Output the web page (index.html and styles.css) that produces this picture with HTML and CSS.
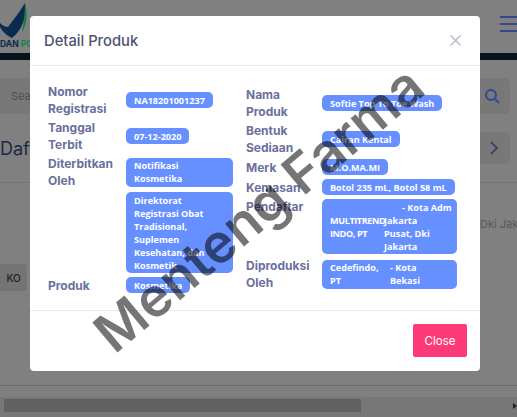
FILE: index.html
```html
<!DOCTYPE html>
<html lang="en">
<head>
  <meta charset="UTF-8" />
  <meta name="viewport" content="width=device-width, initial-scale=1.0" />
  <title>Detail Produk</title>
  <link rel="stylesheet" href="styles.css">
</head>
<body>

<div class="page">
  <div class="top-bar">
    <div class="logo">
      <svg class="logo-mark" width="30" height="40" viewBox="0 0 30 40">
        <path d="M0 23 C3 26 6 27 8 27 C13 20 20 12 25 3 C26 16 24 28 12 38 C7 36 2 31 0 27 Z" fill="#0a2a4f" />
        <path d="M25 3 C28 14 27 24 22 32 C24 22 25 12 25 3 Z" fill="#14813f" />
      </svg>
      <span class="logo-text">DAN <span class="logo-green">PO</span></span>
    </div>
    <div class="burger"><span></span><span></span><span></span></div>
  </div>
  <div class="strip"></div>

  <div class="search">
    <span class="search-text">Search</span>
    <svg width="16" height="16" viewBox="0 0 16 16" fill="none" stroke="#2c4a9a" stroke-width="2">
      <circle cx="7" cy="7" r="5" />
      <path d="M11 11 L15 15" />
    </svg>
  </div>

  <div class="list-head">
    <h2>Daftar Produk</h2>
    <div class="next-box">
      <svg width="10" height="14" viewBox="0 0 10 14" fill="none" stroke="#3b4468" stroke-width="2"><path d="M2 1 L8 7 L2 13" /></svg>
    </div>
  </div>

  <div class="list-row">
    <span class="row-city">Dki Jakarta</span>
  </div>
  <div class="ko-box">KO</div>

  <div class="bottom">
    <div class="scroll-track">
      <div class="scroll-thumb"></div>
      <div class="scroll-arrow"></div>
    </div>
  </div>
</div>

<div class="modal">
  <div class="modal-header">
    <h5>Detail Produk</h5>
    <svg class="close-x" width="11" height="11" viewBox="0 0 11 11" stroke="#b9bccb" stroke-width="1.5"><path d="M0.5 0.5 L10.5 10.5 M10.5 0.5 L0.5 10.5" /></svg>
  </div>

  <div class="modal-body">
    <div class="info-col left">
      <div class="info-row">
        <div class="label">Nomor Registrasi</div>
        <div class="badge">NA18201001237</div>
      </div>
      <div class="info-row">
        <div class="label">Tanggal Terbit</div>
        <div class="badge">07-12-2020</div>
      </div>
      <div class="info-row">
        <div class="label">Diterbitkan Oleh</div>
        <div class="badge wrap">Notifikasi Kosmetika</div>
      </div>
      <div class="info-row">
        <div class="label"></div>
        <div class="badge wrap">Direktorat Registrasi Obat Tradisional, Suplemen Kesehatan, dan Kosmetik</div>
      </div>
      <div class="info-row">
        <div class="label">Produk</div>
        <div class="badge">Kosmetika</div>
      </div>
    </div>

    <div class="info-col right">
      <div class="info-row">
        <div class="label">Nama Produk</div>
        <div class="badge">Softie Top To Toe Wash</div>
      </div>
      <div class="info-row">
        <div class="label">Bentuk Sediaan</div>
        <div class="badge">Cairan Kental</div>
      </div>
      <div class="info-row">
        <div class="label">Merk</div>
        <div class="badge">M.O.MA.MI</div>
      </div>
      <div class="info-row">
        <div class="label">Kemasan</div>
        <div class="badge">Botol 235 mL, Botol 58 mL</div>
      </div>
      <div class="info-row top">
        <div class="label">Pendaftar</div>
        <div class="badge split">
          <span class="split-name">MULTITREND INDO, PT</span>
          <span class="split-place indent">- Kota Adm<br>Jakarta<br>Pusat, Dki<br>Jakarta</span>
        </div>
      </div>
      <div class="info-row">
        <div class="label">Diproduksi Oleh</div>
        <div class="badge split">
          <span class="split-name wide">Cedefindo,<br>PT</span>
          <span class="split-place">- Kota<br>Bekasi</span>
        </div>
      </div>
    </div>
  </div>

  <div class="modal-footer">
    <button class="close-btn">Close</button>
  </div>
</div>

<div class="watermark">Menteng Farma</div>

</body>
</html>
```

FILE: styles.css
```css
* { margin: 0; padding: 0; box-sizing: border-box; }

html, body {
  height: 100%;
  overflow: hidden;
}

body {
  font-family: 'Inter', 'Liberation Sans', sans-serif;
  background: #808080;
  position: relative;
}

/* page behind the dialog, already dimmed */
.page {
  display: flex;
  flex-direction: column;
  height: 417px;
  color: #3a3a3a;
}

.top-bar {
  height: 53px;
  display: flex;
  justify-content: space-between;
}

.logo {
  position: relative;
  width: 40px;
}

.logo-mark {
  position: absolute;
  top: 0;
  left: 0;
}

.logo-text {
  position: absolute;
  top: 39px;
  left: 0;
  font-size: 8.5px;
  font-weight: 700;
  color: #0b2a4a;
  white-space: nowrap;
}

.logo-green { color: #14813f; }

.burger {
  display: flex;
  flex-direction: column;
  gap: 5px;
  width: 17px;
  margin-top: 16px;
}

.burger span {
  height: 2px;
  background: #34488f;
}

.strip {
  height: 7px;
  background: #04141d;
}

.search {
  height: 36px;
  margin: 18px 7px 0 0;
  padding: 0 10px 0 11px;
  background: #787878;
  border-radius: 0 5px 5px 0;
  display: flex;
  justify-content: space-between;
  align-items: center;
  font-size: 11px;
  color: #4d4d4d;
}

.list-head {
  display: flex;
  justify-content: space-between;
  align-items: center;
  margin-top: 18px;
  height: 32px;
}

.list-head h2 {
  font-size: 18px;
  font-weight: 400;
  color: #1c2a44;
}

.next-box {
  width: 32px;
  height: 32px;
  margin-right: 7px;
  background: #787878;
  border-radius: 5px;
  display: flex;
  justify-content: center;
  align-items: center;
}

.list-row {
  margin-top: 18px;
  border-top: 1px solid #747474;
  height: 82px;
  display: flex;
  justify-content: flex-end;
  padding-top: 34px;
}

.row-city {
  font-size: 11px;
  color: #5a5a5a;
  width: 37px;
  white-space: nowrap;
  overflow: hidden;
}

.ko-box {
  width: 27px;
  height: 27px;
  background: #747474;
  border-radius: 0 4px 4px 0;
  display: flex;
  justify-content: center;
  align-items: center;
  font-size: 10px;
  font-weight: 500;
  color: #222;
}

.bottom {
  margin-top: auto;
  height: 32px;
  border-top: 1px solid #6a6a6a;
  padding-top: 11px;
}

.scroll-track {
  height: 20px;
  background: #777;
  padding: 2px 0 0 4px;
  display: flex;
  justify-content: space-between;
}

.scroll-thumb {
  width: 357px;
  height: 13px;
  background: #616161;
}

.scroll-arrow {
  width: 0;
  height: 0;
  margin: 4px 0 0;
  border-left: 4px solid #222;
  border-top: 3px solid transparent;
  border-bottom: 3px solid transparent;
}

/* dialog */
.modal {
  position: absolute;
  top: 16px;
  left: 30px;
  width: 450px;
  background: #fff;
  border-radius: 4px;
  display: flex;
  flex-direction: column;
}

.modal-header {
  height: 50px;
  padding: 0 19px 0 14px;
  border-bottom: 1px solid #e9ebf2;
  display: flex;
  justify-content: space-between;
  align-items: center;
}

.modal-header h5 {
  font-size: 14.75px;
  font-weight: 500;
  color: #4e5270;
}

.modal-body {
  display: flex;
  gap: 13px;
  padding: 18px 22px 17px 18px;
  border-bottom: 1px solid #e9ebf2;
}

.info-col {
  display: flex;
  flex-direction: column;
  gap: 4px;
}

.info-col.left { width: 185px; }

.info-col.right {
  width: 211px;
  padding-top: 3px;
}

.info-row {
  display: grid;
  align-items: center;
}

.left .info-row { grid-template-columns: 78px 107px; }
.right .info-row { grid-template-columns: 76px 135px; }

.info-row.top { align-items: start; }

.label {
  font-size: 12px;
  font-weight: 700;
  line-height: 17px;
  margin: -1px 0;
  color: #6a6f9e;
}

.badge {
  justify-self: start;
  background: #6690ff;
  color: #fff;
  font-family: 'Open Sans', 'Liberation Sans', sans-serif;
  font-size: 9.1px;
  font-weight: 700;
  line-height: 13px;
  padding: 1.5px 8px;
  border-radius: 5px;
}

.badge.wrap {
  width: 100%;
  padding-right: 14px;
}

.badge.split {
  display: flex;
  width: 100%;
  align-items: center;
}

.split-name {
  width: 54px;
  flex-shrink: 0;
  letter-spacing: -0.4px;
}

.split-name.wide { width: 60px; letter-spacing: 0; }
.split-place { white-space: nowrap; }
.indent { text-indent: 18px; }

.modal-footer {
  height: 60px;
  padding: 13px;
  display: flex;
  justify-content: flex-end;
}

.close-btn {
  width: 54px;
  height: 33px;
  background: #fd3a78;
  color: #fff;
  border: none;
  border-radius: 2px;
  font-family: inherit;
  font-size: 11.5px;
  cursor: pointer;
}

.watermark {
  position: absolute;
  top: 174px;
  left: 29px;
  width: 460px;
  text-align: center;
  font-size: 54px;
  font-weight: 600;
  line-height: 70px;
  color: rgba(0, 0, 0, 0.54);
  white-space: nowrap;
  transform: rotate(-40deg);
  pointer-events: none;
}
```
